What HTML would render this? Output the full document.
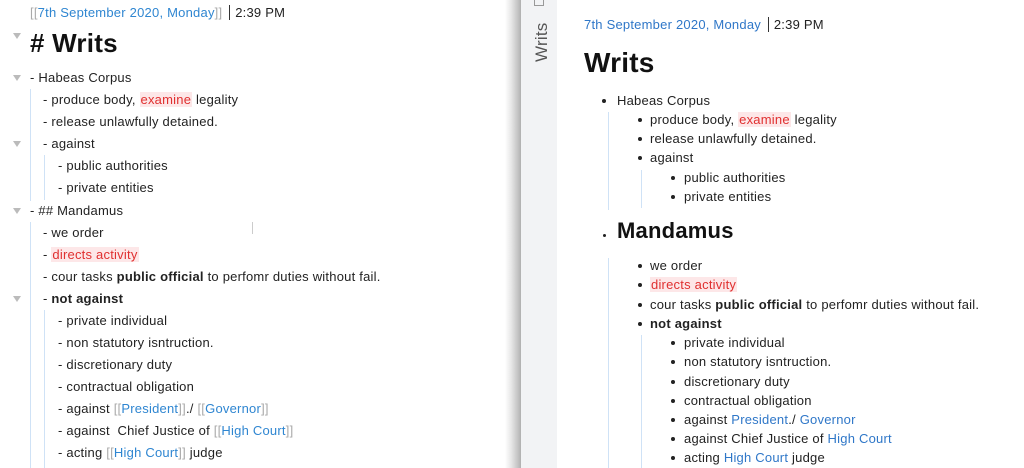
<!DOCTYPE html>
<html><head><meta charset="utf-8"><style>
body{margin:0;width:1024px;height:468px;overflow:hidden;background:#fff;font-family:"Liberation Sans",sans-serif;font-size:13px;letter-spacing:0.22px;color:#222;position:relative}
.l{position:absolute;white-space:nowrap;line-height:16px;height:16px}
.b{color:#aaa}.a{color:#2f86d1}.ra{color:#2f77c8}
.hl{background:#fde7e8;color:#e03030;padding:0 1px}
.tri{position:absolute;width:0;height:0;border-left:4px solid transparent;border-right:4px solid transparent;border-top:6px solid #bbb}
.vl{position:absolute;width:1px;background:#cfe2f6}
.dot{position:absolute;width:4px;height:4px;border-radius:50%;background:#222}
.sep{border-left:1px solid #333;padding-left:5px;margin-left:3px;color:#222}
</style></head><body>
<div class="l" style="left:30px;top:5px;color:#2f86d1"><span class="b">[[</span>7th September 2020, Monday<span class="b">]]</span> <span class="sep">2:39 PM</span></div>
<div class="tri" style="left:13px;top:33px"></div>
<div class="l" style="left:30px;top:28px;font-size:26px;font-weight:bold;line-height:30px;height:30px;color:#111"># Writs</div>
<div class="tri" style="left:13px;top:75px"></div>
<div class="tri" style="left:13px;top:141px"></div>
<div class="tri" style="left:13px;top:208px"></div>
<div class="tri" style="left:13px;top:296px"></div>
<div class="vl" style="left:30px;top:89px;height:112px"></div>
<div class="vl" style="left:44px;top:155px;height:45px"></div>
<div class="vl" style="left:30px;top:222px;height:246px"></div>
<div class="vl" style="left:44px;top:310px;height:158px"></div>
<div class="l" style="left:30px;top:70px">- Habeas Corpus</div>
<div class="l" style="left:43px;top:92px">- produce body, <span class="hl">examine</span> legality</div>
<div class="l" style="left:43px;top:114px">- release unlawfully detained.</div>
<div class="l" style="left:43px;top:136px">- against</div>
<div class="l" style="left:58px;top:158px">- public authorities</div>
<div class="l" style="left:58px;top:180px">- private entities</div>
<div class="l" style="left:30px;top:203px">- ## Mandamus</div>
<div class="l" style="left:43px;top:225px">- we order</div>
<div class="l" style="left:43px;top:247px">- <span class="hl">directs activity</span></div>
<div class="l" style="left:43px;top:269px">- cour tasks <b>public official</b> to perfomr duties without fail.</div>
<div class="l" style="left:43px;top:291px">- <b>not against</b></div>
<div class="l" style="left:58px;top:313px">- private individual</div>
<div class="l" style="left:58px;top:335px">- non statutory isntruction.</div>
<div class="l" style="left:58px;top:357px">- discretionary duty</div>
<div class="l" style="left:58px;top:379px">- contractual obligation</div>
<div class="l" style="left:58px;top:401px">- against <span class="b">[[</span><span class="a">President</span><span class="b">]]</span>./ <span class="b">[[</span><span class="a">Governor</span><span class="b">]]</span></div>
<div class="l" style="left:58px;top:423px">- against &nbsp;Chief Justice of <span class="b">[[</span><span class="a">High Court</span><span class="b">]]</span></div>
<div class="l" style="left:58px;top:445px">- acting <span class="b">[[</span><span class="a">High Court</span><span class="b">]]</span> judge</div>
<div style="position:absolute;left:252px;top:222px;width:1px;height:12px;background:#ccc"></div>
<div style="position:absolute;left:505px;top:0;width:16px;height:468px;background:linear-gradient(to right,#fff,#e6e6e6 40%,#c4c4c4 80%,#b0b0b0)"></div>
<div style="position:absolute;left:521px;top:0;width:36px;height:468px;background:#f2f3f5"></div>
<div style="position:absolute;left:534px;top:-4px;width:8px;height:8px;border:1px solid #999"></div>
<div style="position:absolute;left:532px;top:62px;transform:rotate(-90deg);transform-origin:0 0;font-size:17px;color:#555;white-space:nowrap">Writs</div>
<div class="l" style="left:584px;top:17px"><span class="ra">7th September 2020, Monday</span> <span class="sep">2:39 PM</span></div>
<div class="l" style="left:584px;top:47px;font-size:28px;font-weight:bold;line-height:32px;height:32px;color:#111">Writs</div>
<div class="vl" style="left:608px;top:112px;height:98px"></div>
<div class="vl" style="left:641px;top:170px;height:38px"></div>
<div class="vl" style="left:608px;top:258px;height:210px"></div>
<div class="vl" style="left:641px;top:335px;height:133px"></div>
<div class="dot" style="left:602px;top:99px"></div><div class="l" style="left:617px;top:93px">Habeas Corpus</div>
<div class="dot" style="left:638px;top:118px"></div><div class="l" style="left:650px;top:112px">produce body, <span class="hl">examine</span> legality</div>
<div class="dot" style="left:638px;top:137px"></div><div class="l" style="left:650px;top:131px">release unlawfully detained.</div>
<div class="dot" style="left:638px;top:156px"></div><div class="l" style="left:650px;top:150px">against</div>
<div class="dot" style="left:671px;top:176px"></div><div class="l" style="left:684px;top:170px">public authorities</div>
<div class="dot" style="left:671px;top:195px"></div><div class="l" style="left:684px;top:189px">private entities</div>
<div class="dot" style="left:603px;top:234px;width:3px;height:3px"></div><div class="l" style="left:617px;top:218px;font-size:22px;font-weight:bold;line-height:26px;height:26px;color:#111">Mandamus</div>
<div class="dot" style="left:638px;top:264px"></div><div class="l" style="left:650px;top:258px">we order</div>
<div class="dot" style="left:638px;top:283px"></div><div class="l" style="left:650px;top:277px"><span class="hl">directs activity</span></div>
<div class="dot" style="left:638px;top:303px"></div><div class="l" style="left:650px;top:297px">cour tasks <b>public official</b> to perfomr duties without fail.</div>
<div class="dot" style="left:638px;top:322px"></div><div class="l" style="left:650px;top:316px"><b>not against</b></div>
<div class="dot" style="left:671px;top:341px"></div><div class="l" style="left:684px;top:335px">private individual</div>
<div class="dot" style="left:671px;top:360px"></div><div class="l" style="left:684px;top:354px">non statutory isntruction.</div>
<div class="dot" style="left:671px;top:380px"></div><div class="l" style="left:684px;top:374px">discretionary duty</div>
<div class="dot" style="left:671px;top:399px"></div><div class="l" style="left:684px;top:393px">contractual obligation</div>
<div class="dot" style="left:671px;top:418px"></div><div class="l" style="left:684px;top:412px">against <span class="ra">President</span>./ <span class="ra">Governor</span></div>
<div class="dot" style="left:671px;top:437px"></div><div class="l" style="left:684px;top:431px">against Chief Justice of <span class="ra">High Court</span></div>
<div class="dot" style="left:671px;top:456px"></div><div class="l" style="left:684px;top:450px">acting <span class="ra">High Court</span> judge</div>
</body></html>
